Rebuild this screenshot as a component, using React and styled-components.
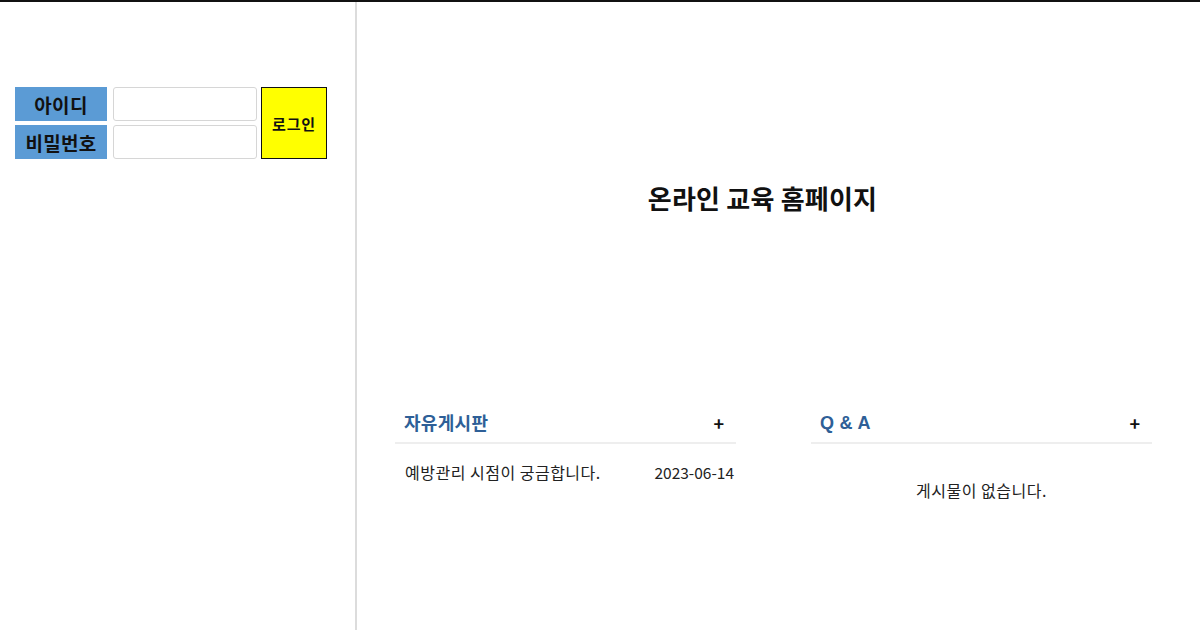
import React from "react";
import styled, { createGlobalStyle } from "styled-components";

const Global = createGlobalStyle`
  html, body { margin: 0; padding: 0; background: #fff; }
  body { font-family: "Noto Sans CJK KR", "Noto Sans", sans-serif; color: #111; }
  * { box-sizing: border-box; }
`;

const Page = styled.div`
  border-top: 2px solid #111;
  display: flex;
  height: 630px;
`;

const Sidebar = styled.aside`
  width: 357px;
  flex-shrink: 0;
  border-right: 2px solid #dcdcdc;
  padding: 85px 0 0 15px;
`;

const LoginForm = styled.form`
  display: flex;
  align-items: stretch;
  gap: 4px;
`;

const Fields = styled.div`
  display: flex;
  flex-direction: column;
  gap: 4px;
`;

const FieldRow = styled.div`
  display: flex;
  align-items: stretch;
  gap: 6px;
`;

const Label = styled.label`
  width: 92px;
  height: 34px;
  background: #5b9bd5;
  color: #111;
  font-weight: 700;
  font-size: 19px;
  display: flex;
  align-items: center;
  justify-content: center;
  letter-spacing: 0.3px;
`;

const Input = styled.input`
  width: 144px;
  height: 34px;
  border: 1px solid #d6d6d6;
  border-radius: 3px;
  background: #fff;
  outline: none;
`;

const LoginButton = styled.button`
  width: 66px;
  border: 1px solid #111;
  background: #ffff00;
  font-family: inherit;
  font-weight: 700;
  font-size: 15px;
  letter-spacing: 0.8px;
  color: #111;
  padding: 0;
  cursor: pointer;
`;

const Main = styled.main`
  flex: 1;
  display: flex;
  flex-direction: column;
  padding: 0 49px 0 38px;
`;

const Title = styled.h1`
  margin: 178px 0 0;
  padding-right: 22px;
  text-align: center;
  font-size: 26px;
  font-weight: 700;
  line-height: 36px;
  letter-spacing: 0.2px;
  color: #111;
`;

const Boards = styled.div`
  margin-top: 185px;
  display: grid;
  grid-template-columns: 341px 341px;
  column-gap: 75px;
`;

const Board = styled.section``;

const BoardHeader = styled.div`
  display: flex;
  align-items: center;
  justify-content: space-between;
  height: 43px;
  padding: 0 12px 0 9px;
  border-bottom: 2px solid #eeeeee;
`;

const BoardTitle = styled.h2`
  margin: 0;
  font-size: 18px;
  font-weight: 700;
  color: #2e5f97;
  letter-spacing: 0.3px;
  padding-top: ${(p) => (p.$latin ? "3px" : "0")};
  font-family: ${(p) =>
    p.$latin ? '"Liberation Sans", Arial, sans-serif' : "inherit"};
`;

const Plus = styled.span`
  font-size: 18px;
  font-weight: 700;
  color: #111;
  line-height: 1;
  padding-top: 3px;
`;

const PostRow = styled.div`
  display: flex;
  justify-content: space-between;
  padding: 17px 2px 0 10px;
  font-size: 16px;
  line-height: 22px;
  color: #222;
`;

const PostTitle = styled.span`
  letter-spacing: 0.5px;
`;

const PostDate = styled.span`
  font-size: 15.5px;
`;

const Empty = styled.p`
  margin: 0;
  padding-top: 35px;
  text-align: center;
  font-size: 16px;
  line-height: 22px;
  letter-spacing: 0.5px;
  color: #222;
`;

export default function App() {
  return (
    <>
      <Global />
      <Page>
        <Sidebar>
          <LoginForm onSubmit={(e) => e.preventDefault()}>
            <Fields>
              <FieldRow>
                <Label>아이디</Label>
                <Input type="text" />
              </FieldRow>
              <FieldRow>
                <Label>비밀번호</Label>
                <Input type="password" />
              </FieldRow>
            </Fields>
            <LoginButton type="submit">로그인</LoginButton>
          </LoginForm>
        </Sidebar>
        <Main>
          <Title>온라인 교육 홈페이지</Title>
          <Boards>
            <Board>
              <BoardHeader>
                <BoardTitle>자유게시판</BoardTitle>
                <Plus>+</Plus>
              </BoardHeader>
              <PostRow>
                <PostTitle>예방관리 시점이 궁금합니다.</PostTitle>
                <PostDate>2023-06-14</PostDate>
              </PostRow>
            </Board>
            <Board>
              <BoardHeader>
                <BoardTitle $latin>Q &amp; A</BoardTitle>
                <Plus>+</Plus>
              </BoardHeader>
              <Empty>게시물이 없습니다.</Empty>
            </Board>
          </Boards>
        </Main>
      </Page>
    </>
  );
}
